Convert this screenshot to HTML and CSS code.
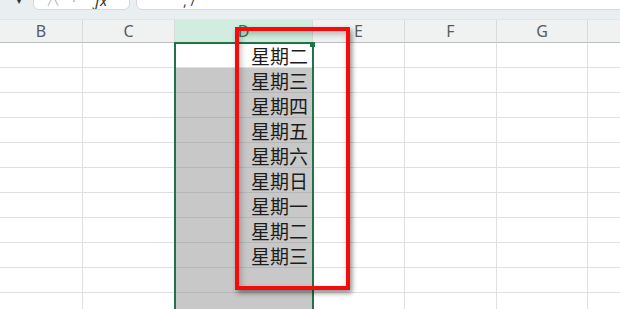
FILE: index.html
```html
<!DOCTYPE html>
<html lang="zh">
<head>
    <meta charset="UTF-8">
    <meta name="viewport" content="width=device-width, initial-scale=1.0">
    <title>星期</title>
    <link rel="stylesheet" href="styles.css">
</head>
<body>

    <div class="toolbar">
        <span class="drop">▾</span>
        <div class="box namebox">
            <span class="faint">∧</span>
            <span class="faint">·</span>
            <span class="fx">ƒx</span>
        </div>
        <div class="box formula">
            <span class="ftext">, /</span>
        </div>
    </div>

    <div class="sheet">
        <div class="grid">
            <div class="head">B</div>
            <div class="head">C</div>
            <div class="head sel">D</div>
            <div class="head">E</div>
            <div class="head">F</div>
            <div class="head">G</div>
            <div class="head"></div>
        </div>
        <div id="rows"></div>

        <div class="selection"><span class="handle"></span></div>
        <div class="redbox"></div>
    </div>

    <script>
        const days = ["星期二", "星期三", "星期四", "星期五", "星期六", "星期日", "星期一", "星期二", "星期三", "", ""];
        const rows = document.getElementById("rows");

        days.forEach((day, i) => {
            const row = document.createElement("div");
            row.className = "grid";
            for (let c = 0; c < 7; c++) {
                const cell = document.createElement("div");
                cell.className = "cell";
                if (c === 2) {
                    cell.classList.add("dcol");
                    if (i > 0) cell.classList.add("shaded");
                    cell.textContent = day;
                }
                row.appendChild(cell);
            }
            rows.appendChild(row);
        });
    </script>

</body>
</html>
```

FILE: styles.css
```css
body {
    margin: 0;
    overflow: hidden;
    background: #fff;
    font-family: "Noto Sans", "Noto Sans CJK SC", sans-serif;
}
.toolbar {
    position: relative;
    height: 19px;
    background: #e9eef0;
    display: flex;
    align-items: flex-end;
    overflow: hidden;
}
.drop {
    width: 33px;
    font-size: 12px;
    color: #333;
    align-self: flex-start;
    margin-top: -9px;
    padding-left: 16px;
    box-sizing: border-box;
}
.box {
    align-self: flex-start;
    height: 22px;
    margin-top: -12px;
    background: #fff;
    border: 1px solid #d6d9db;
    border-radius: 6px;
    box-sizing: border-box;
    display: flex;
    align-items: flex-end;
    overflow: hidden;
}
.namebox {
    width: 97px;
    padding: 0 0 1px 12px;
    gap: 12px;
}
.formula {
    margin-left: 6px;
    flex: 1;
    margin-right: -20px;
    padding: 0 0 1px 46px;
}
.faint {
    color: #b8b8b8;
    font-size: 14px;
    line-height: 15px;
}
.fx {
    margin-left: 6px;
    font-size: 15px;
    line-height: 15px;
    font-style: italic;
    color: #333;
}
.ftext {
    font-size: 14px;
    line-height: 15px;
    color: #444;
}
.sheet {
    position: relative;
    height: 290px;
    overflow: hidden;
}
.grid {
    display: grid;
    grid-template-columns: 83px 92px 138px 92px 92px 91px 40px;
}
.head {
    height: 24px;
    box-sizing: border-box;
    background: #f0f1f1;
    border-top: 1px solid #e2e4e5;
    border-right: 1px solid #dadada;
    border-bottom: 1px solid #bdbdbd;
    color: #585c60;
    font-size: 16px;
    line-height: 22px;
    text-align: center;
}
.head.sel {
    background: #d2ede0;
    color: #2f7c52;
}
.cell {
    height: 25px;
    box-sizing: border-box;
    border-right: 1px solid #e0e0e0;
    border-bottom: 1px solid #e0e0e0;
}
.dcol {
    text-align: right;
    padding-right: 4px;
    font-family: "Noto Sans CJK SC", sans-serif;
    font-size: 19px;
    line-height: 25px;
    color: #1c1c1c;
}
.shaded {
    background: #c8c8c8;
    border-bottom-color: #b6b6b6;
}
.selection {
    position: absolute;
    left: 174px;
    top: 23px;
    width: 140px;
    height: 300px;
    box-sizing: border-box;
    border: 2px solid #1f7346;
}
.handle {
    position: absolute;
    right: -3px;
    top: -2px;
    width: 5px;
    height: 5px;
    background: #1f7346;
}
.redbox {
    position: absolute;
    left: 235px;
    top: 8px;
    width: 115px;
    height: 263px;
    box-sizing: border-box;
    border: 4px solid #f40c0c;
    box-shadow: 2px 3px 5px rgba(0,0,0,0.45), inset 2px 3px 6px rgba(0,0,0,0.25);
}
```
